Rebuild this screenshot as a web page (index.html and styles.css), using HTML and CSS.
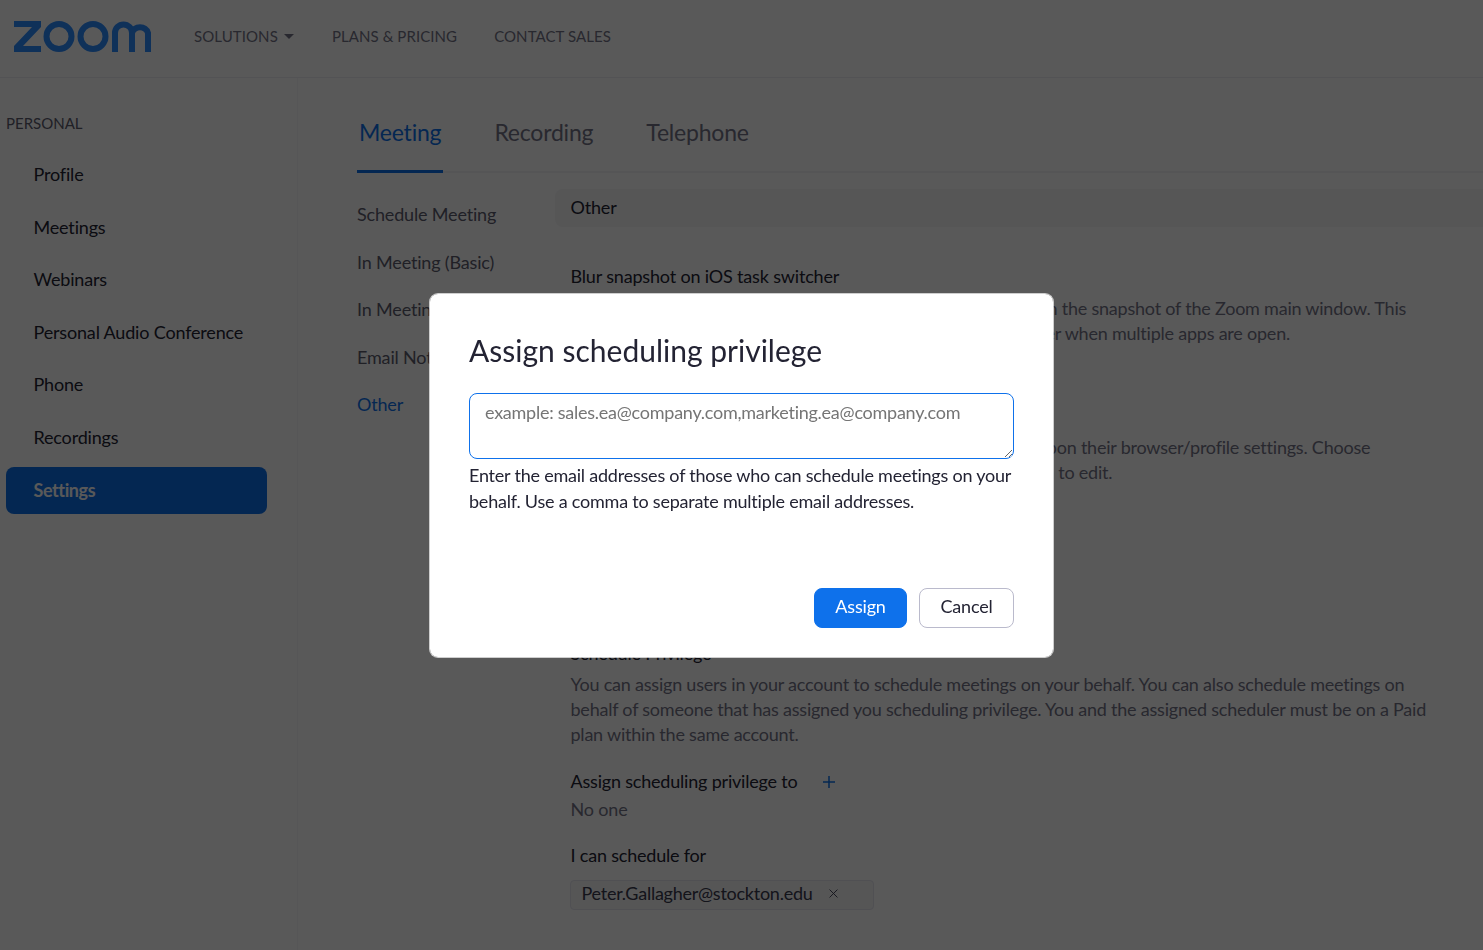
FILE: index.html
```html
<!DOCTYPE html>
<html lang="en">
<head>
<meta charset="utf-8">
<title>Settings - Zoom</title>
<link rel="stylesheet" href="styles.css">
</head>
<body>
<header class="topbar">
  <svg class="logo" viewBox="0 0 140 32" aria-label="Zoom logo">
    <path class="logo-fill" d="M1 1H28V7L10 26H28V32H1V26L19 7H1Z"/>
    <circle class="logo-line" cx="46" cy="16.500" r="12.500"/>
    <circle class="logo-line" cx="80" cy="16.500" r="12.500"/>
    <path class="logo-line" d="M102 32V13a8.500 8.500 0 0 1 17 0V32M119 13a8.500 8.500 0 0 1 16 0V32"/>
  </svg>
  <nav class="topnav">
    <a class="topnav-item first-link">SOLUTIONS <span class="caret"></span></a>
    <a class="topnav-item">PLANS &amp; PRICING</a>
    <a class="topnav-item">CONTACT SALES</a>
  </nav>
</header>
<div class="shell">
  <aside class="sidebar">
    <div class="side-title">PERSONAL</div>
    <a class="side-item">Profile</a>
    <a class="side-item">Meetings</a>
    <a class="side-item">Webinars</a>
    <a class="side-item">Personal Audio Conference</a>
    <a class="side-item">Phone</a>
    <a class="side-item">Recordings</a>
    <a class="side-item active">Settings</a>
  </aside>
  <main class="content">
    <div class="tabs">
      <a class="tab active">Meeting</a>
      <a class="tab">Recording</a>
      <a class="tab">Telephone</a>
    </div>
    <div class="panel">
      <nav class="subnav">
        <a class="sub-item">Schedule Meeting</a>
        <a class="sub-item">In Meeting (Basic)</a>
        <a class="sub-item">In Meeting (Advanced)</a>
        <a class="sub-item">Email Notification</a>
        <a class="sub-item current">Other</a>
      </nav>
      <section class="details">
        <div class="section-head">Other</div>
        <div class="setting first">
          <div class="setting-title">Blur snapshot on iOS task switcher</div>
          <p class="setting-text">Enable this option to hide potentially sensitive information from the snapshot of the Zoom main window. This snapshot displays as the preview screen in the iOS task switcher when multiple apps are open.</p>
        </div>
        <div class="setting second">
          <div class="setting-title">Integrated Authentication</div>
          <p class="setting-text">Some browsers may try to open links in the Zoom app based upon their browser/profile settings. Choose domains that are allowed for this action, then click the pen icon to edit.</p>
          <svg class="pen" viewBox="0 0 12 12"><path d="M1 11l1-3 6-6 2 2-6 6z"/></svg>
        </div>
        <div class="setting third">
          <div class="setting-title">Schedule Privilege</div>
          <p class="setting-text">You can assign users in your account to schedule meetings on your behalf. You can also schedule meetings on behalf of someone that has assigned you scheduling privilege. You and the assigned scheduler must be on a Paid plan within the same account.</p>
          <div class="assign-row">
            <span class="label">Assign scheduling privilege to</span>
            <svg class="plus" viewBox="0 0 12 12"><path d="M6 0V12M0 6H12"/></svg>
          </div>
          <div class="none">No one</div>
          <div class="label for">I can schedule for</div>
          <div class="chip"><span>Peter.Gallagher@stockton.edu</span><svg class="chip-x" viewBox="0 0 8 8"><path d="M0.500 0.500L7.500 7.500M7.500 0.500L0.500 7.500"/></svg></div>
        </div>
      </section>
    </div>
  </main>
</div>
<div class="overlay"></div>
<div class="modal" role="dialog">
  <h2 class="modal-title">Assign scheduling privilege</h2>
  <textarea class="modal-input" placeholder="example: sales.ea@company.com,marketing.ea@company.com"></textarea>
  <p class="modal-help">Enter the email addresses of those who can schedule meetings on your behalf. Use a comma to separate multiple email addresses.</p>
  <div class="modal-actions">
    <button class="btn primary">Assign</button>
    <button class="btn">Cancel</button>
  </div>
</div>
</body>
</html>
```
FILE: styles.css
```css
* { box-sizing: border-box; }
html, body { margin: 0; height: 950px; overflow: hidden; }
body { font-family: Lato, "Open Sans", sans-serif; font-size: 18px; letter-spacing: -0.17px; color: #232333; background: #fff; }
.topbar { height: 78px; display: flex; align-items: center; padding: 0 0 5px 13px; border-bottom: 1px solid #ededf4; }
.logo { width: 140px; height: 32px; flex: none; }
.logo-fill { fill: #2d8cff; }
.logo-line { fill: none; stroke: #2d8cff; stroke-width: 6; }
.topnav { display: flex; margin-left: 41px; gap: 37px; }
.topnav-item { font-size: 15px; letter-spacing: 0.08px; color: #747487; display: flex; align-items: center; gap: 6px; }
.first-link { margin-right: 1px; }
.caret { width: 0; height: 0; border: 5px solid transparent; border-top-color: #747487; border-bottom-width: 0; }
.shell { display: flex; height: 872px; }
.sidebar { width: 298px; flex: none; padding: 35px 30px 0 6px; background: #fff; border-right: 1px solid #f6f6fa; }
.side-title { font-size: 15px; letter-spacing: 0; color: #5c5c6e; height: 38px; line-height: 20px; }
.side-item { display: block; height: 47px; margin-bottom: 5.500px; padding-left: 27.500px; line-height: 47px; border-radius: 8px; color: #232333; }
.side-item.active { margin-top: 6.500px; line-height: 46px; background: #0e71eb; color: #fff; font-weight: 700; letter-spacing: -0.4px; }
.content { flex: 1; padding-left: 59px; min-width: 0; }
.tabs { display: flex; gap: 49px; height: 95px; padding-top: 36px; border-bottom: 2px solid #f2f2f5; }
.tab { font-size: 23px; letter-spacing: -0.2px; line-height: 36px; color: #747487; padding: 0 2px; height: 59px; }
.tab.active { color: #0e71eb; border-bottom: 3px solid #0e71eb; }
.panel { display: flex; }
.subnav { width: 198px; flex: none; padding-top: 18px; display: flex; flex-direction: column; }
.sub-item { display: block; height: 47.500px; line-height: 47px; color: #5c5c6e; white-space: nowrap; }
.sub-item.current { color: #0e71eb; }
.details { flex: 1; min-width: 0; padding-top: 16px; }
.section-head { height: 38px; line-height: 36px; padding-left: 15.500px; background: #f5f5f7; border-radius: 8px 0 0 8px; color: #232333; }
.setting { padding-left: 15.500px; position: relative; padding-right: 55px; }
.setting-title { line-height: 25px; color: #232333; }
.setting-text { margin: 7px 0 0; line-height: 25px; letter-spacing: -0.22px; color: #747487; }
.first { margin-top: 37px; }
.second { margin-top: 57px; }
.third { margin-top: 156px; }
.third .setting-text { margin-top: 6px; }
.pen { position: absolute; left: 484px; top: 102px; width: 12px; height: 12px; }
.pen path { fill: #232333; }
.assign-row { display: flex; align-items: center; gap: 25px; margin-top: 22px; line-height: 25px; }
.label { color: #232333; line-height: 25px; letter-spacing: -0.2px; }
.plus { width: 12px; height: 12px; }
.plus path { stroke: #0e71eb; stroke-width: 1.500; fill: none; }
.none { color: #747487; line-height: 25px; margin-top: 3px; }
.for { margin-top: 21px; }
.chip { width: 304px; height: 30px; margin: 12px 0 0 -1px; padding: 0 0 4px 11px; display: flex; align-items: center; gap: 16px; background: #f5f5f7; border: 1px solid #e4e4ed; border-radius: 4px; letter-spacing: -0.25px; color: #39394d; }
.chip-x { width: 9px; height: 9px; }
.chip-x path { stroke: #39394d; stroke-width: 0.800; fill: none; }
.overlay { position: fixed; inset: 0; background: rgba(0, 0, 0, 0.65); }
.modal { position: fixed; left: 429px; top: 293px; width: 625px; height: 365px; background: #fff; background-clip: padding-box; border: 1px solid rgba(255, 255, 255, 0.7); border-radius: 9px; padding: 38px 39px 29px; display: flex; flex-direction: column; }
.modal-title { margin: 0; font-size: 30px; letter-spacing: 0; font-weight: 400; line-height: 36px; color: #232333; }
.modal-input { display: block; width: 545px; height: 66px; margin-top: 25px; padding: 6px 15px; border: 1px solid #0e71eb; border-radius: 8px; font: 18px/24px Lato, sans-serif; letter-spacing: -0.25px; outline: none; color: #232333; }
.modal-input::placeholder { color: #757575; opacity: 1; }
.modal-help { margin: 3px -6px 0 0; line-height: 26px; letter-spacing: -0.22px; }
.modal-actions { margin-top: auto; display: flex; justify-content: flex-end; gap: 12px; }
.btn { font: 18px Lato, sans-serif; letter-spacing: -0.17px; height: 40px; width: 95px; border: 1px solid #babacc; border-radius: 8px; background: #fff; color: #232333; padding: 0 0 5px; }
.btn.primary { width: 93px; background: #0e71eb; border-color: #0e71eb; color: #fff; }
```
